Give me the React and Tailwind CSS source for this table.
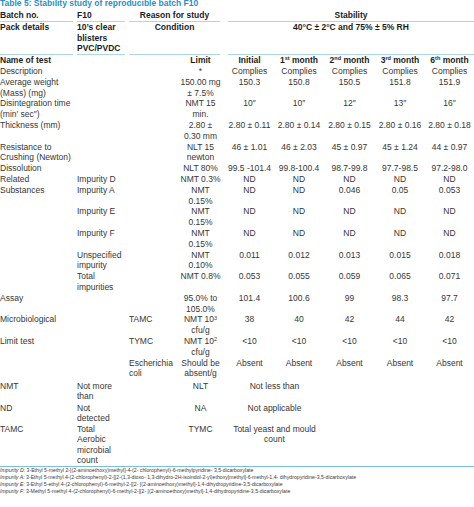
import React from "react";

const GRID = "grid grid-cols-[77px_52px_47px_49px_49px_50px_51px_50px_49px]";

const body = [
  { a: ["Description"], l: ["*"], v: ["Complies", "Complies", "Complies", "Complies", "Complies"] },
  { a: ["Average weight", "(Mass) (mg)"], l: ["150.00 mg", "± 7.5%"], v: ["150.3", "150.8", "150.5", "151.8", "151.9"] },
  { a: ["Disintegration time", "(min′ sec″)"], l: ["NMT 15", "min."], v: ["10″", "10″", "12″", "13″", "16″"] },
  { a: ["Thickness (mm)"], l: ["2.80 ±", "0.30 mm"], v: ["2.80 ± 0.11", "2.80 ± 0.14", "2.80 ± 0.15", "2.80 ± 0.16", "2.80 ± 0.18"] },
  { a: ["Resistance to", "Crushing (Newton)"], l: ["NLT 15", "newton"], v: ["46 ± 1.01", "46 ± 2.03", "45 ± 0.97", "45 ± 1.24", "44 ± 0.97"] },
  { a: ["Dissolution"], l: ["NLT 80%"], v: ["99.5 -101.4", "99.8-100.4", "98.7-99.8", "97.7-98.5", "97.2-98.0"] },
  { a: ["Related"], b: ["Impurity D"], l: ["NMT 0.3%"], v: ["ND", "ND", "ND", "ND", "ND"] },
  { a: ["Substances"], b: ["Impurity A"], l: ["NMT", "0.15%"], v: ["ND", "ND", "0.046", "0.05", "0.053"] },
  { b: ["Impurity E"], l: ["NMT", "0.15%"], v: ["ND", "ND", "ND", "ND", "ND"] },
  { b: ["Impurity F"], l: ["NMT", "0.15%"], v: ["ND", "ND", "ND", "ND", "ND"] },
  { b: ["Unspecified", "impurity"], l: ["NMT", "0.10%"], v: ["0.011", "0.012", "0.013", "0.015", "0.018"] },
  { b: ["Total", "impurities"], l: ["NMT 0.8%"], v: ["0.053", "0.055", "0.059", "0.065", "0.071"] },
  { a: ["Assay"], l: ["95.0% to", "105.0%"], v: ["101.4", "100.6", "99", "98.3", "97.7"] },
  { a: ["Microbiological"], c: ["TAMC"], l: [<>NMT 10<sup className="text-[5.5px]">3</sup></>, "cfu/g"], v: ["38", "40", "42", "44", "42"] },
  { a: ["Limit test"], c: ["TYMC"], l: [<>NMT 10<sup className="text-[5.5px]">2</sup></>, "cfu/g"], v: ["<10", "<10", "<10", "<10", "<10"] },
  { c: ["Escherichia", "coli"], l: ["Should be", "absent/g"], v: ["Absent", "Absent", "Absent", "Absent", "Absent"] },
];

function Lines({ items }) {
  if (!items) return null;
  return items.map((t, i) => (
    <div key={i} className="whitespace-nowrap">
      {t}
    </div>
  ));
}

function BodyRow({ row }) {
  return (
    <div className={GRID}>
      <div><Lines items={row.a} /></div>
      <div><Lines items={row.b} /></div>
      <div><Lines items={row.c} /></div>
      <div className="text-center"><Lines items={row.l} /></div>
      {row.v.map((v, i) => (
        <div key={i} className="text-center whitespace-nowrap">{v}</div>
      ))}
    </div>
  );
}

const line = "border-b border-[#acd6ea]";

function Month({ n, s }) {
  return (
    <div className="text-center whitespace-nowrap">
      {n}
      <sup className="text-[5.5px]">{s}</sup> month
    </div>
  );
}

export default function App() {
  return (
    <div className="w-[474px] h-[507px] overflow-hidden bg-white font-['Liberation_Sans',Arial,sans-serif] text-[8.5px] leading-[10.8px] text-[#363636]">
      {/* Title */}
      <div className="h-[10px] leading-[6px] font-bold text-[#2a8fc7] whitespace-nowrap">
        Table 5: Stability study of reproducible batch F10
      </div>

      {/* Header row 1 */}
      <div className={`${GRID} font-bold text-[#1c1c1c]`}>
        <div className={`${line} mr-[4px]`}>Batch no.</div>
        <div className={`${line} mr-[4px]`}>F10</div>
        <div className={`${line} col-span-2 mr-[5px] text-center`}>Reason for study</div>
        <div className={`${line} col-span-5 ml-[3px] text-center`}>Stability</div>
      </div>

      {/* Header row 2 */}
      <div className={`${GRID} font-bold text-[#1c1c1c]`}>
        <div className={`${line} mr-[4px]`}>Pack details</div>
        <div className={`${line} mr-[4px] whitespace-nowrap`}>
          <div>10’s clear</div>
          <div>blisters</div>
          <div>PVC/PVDC</div>
        </div>
        <div className={`${line} col-span-2 mr-[5px] text-center`}>Condition</div>
        <div className={`${line} col-span-5 ml-[3px] text-center whitespace-nowrap`}>
          40°C ± 2°C and 75% ± 5% RH
        </div>
      </div>

      {/* Header row 3 */}
      <div className={`${GRID} font-bold text-[#1c1c1c]`}>
        <div className="col-span-3">Name of test</div>
        <div className="text-center">Limit</div>
        <div className="text-center">Initial</div>
        <Month n="1" s="st" />
        <Month n="2" s="nd" />
        <Month n="3" s="rd" />
        <Month n="6" s="th" />
      </div>

      {/* Body */}
      {body.map((r, i) => (
        <BodyRow key={i} row={r} />
      ))}

      {/* Abbreviations */}
      <div className="leading-[10.5px]">
        <div className={`${GRID} pt-[1.5px]`}>
          <div>NMT</div>
          <div className="col-span-2">
            <div>Not more</div>
            <div>than</div>
          </div>
          <div className="text-center">NLT</div>
          <div className="col-span-2 text-center whitespace-nowrap">Not less than</div>
        </div>
        <div className={`${GRID} pt-[1px]`}>
          <div>ND</div>
          <div className="col-span-2">
            <div>Not</div>
            <div>detected</div>
          </div>
          <div className="text-center">NA</div>
          <div className="col-span-2 text-center whitespace-nowrap">Not applicable</div>
        </div>
        <div className={GRID}>
          <div>TAMC</div>
          <div className="col-span-2">
            <div>Total</div>
            <div>Aerobic</div>
            <div>microbial</div>
            <div>count</div>
          </div>
          <div className="text-center">TYMC</div>
          <div className="col-span-2 text-center whitespace-nowrap">
            <div>Total yeast and mould</div>
            <div>count</div>
          </div>
        </div>
      </div>

      {/* Footnotes */}
      <div className="border-t border-[#7cc0dd] text-[5.2px] leading-[7px] text-[#3a3a3a] whitespace-nowrap">
        <div>
          <i>Impurity D:</i> 3-Ethyl 5-methyl 2-[(2-aminoethoxy)methyl]-4-(2- chlorophenyl)-6-methylpyridine- 3,5-dicarboxylate
        </div>
        <div>
          <i>Impurity A:</i> 3-Ethyl 5-methyl 4-(2-chlorophenyl)-2-[[2-(1,3-dioxo- 1,3-dihydro-2H-isoindol-2-yl)ethoxy]methyl]-6-methyl-1,4- dihydropyridine-3,5-dicarboxylate
        </div>
        <div>
          <i>Impurity E:</i> 3-Ethyl 5-ethyl 4-(2-chlorophenyl)-6-methyl-2-[[2- [(2-aminoethoxy)methyl]-1,4-dihydropyridine-3,5-dicarboxylate
        </div>
        <div>
          <i>Impurity F:</i> 3-Methyl 5-methyl 4-(2-chlorophenyl)-6-methyl-2-[[2- [(2-aminoethoxy)methyl]-1,4-dihydropyridine-3,5-dicarboxylate
        </div>
      </div>
    </div>
  );
}
